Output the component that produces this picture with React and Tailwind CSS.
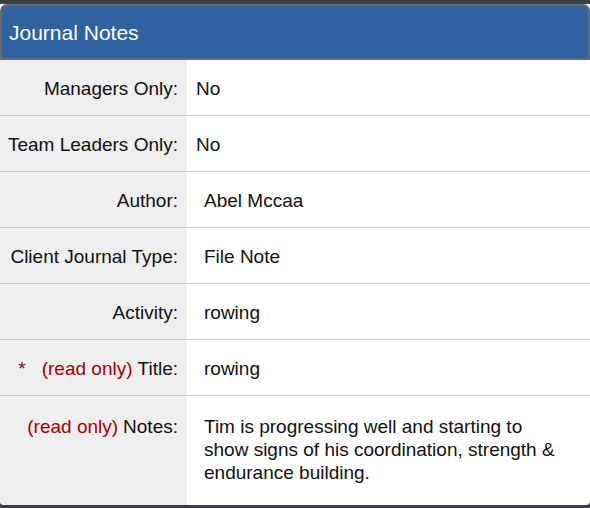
const rows = [
  { label: 'Managers Only:', value: 'No', pad: 'pl-[9px]' },
  { label: 'Team Leaders Only:', value: 'No', pad: 'pl-[9px]' },
  { label: 'Author:', value: 'Abel Mccaa' },
  { label: 'Client Journal Type:', value: 'File Note' },
  { label: 'Activity:', value: 'rowing' },
  { label: 'Title:', value: 'rowing', readOnly: true, required: true },
];

const App = () => {
  return (
    <div className="w-[590px] h-[508px] bg-[#3b4048] pt-[4px] overflow-hidden" style={{ fontFamily: '"Liberation Sans", Arial, sans-serif' }}>
      <div className="h-[501px] bg-white rounded-b-[4px] overflow-hidden flex flex-col">
        <div className="h-[56px] shrink-0 bg-[#2e63a0] border-2 border-[#6a6a6a] rounded-t-[7px] flex items-center px-[7px] pt-[1px]">
          <h1 className="text-[21px] text-white leading-none">Journal Notes</h1>
        </div>

        {rows.map((r, i) => (
          <div key={i} className="flex h-[56px] shrink-0 border-b border-[#cbcbcb] text-[19px] text-[#111]">
            <div className="w-[187px] shrink-0 bg-[#efefef] flex items-center justify-end pr-[9px] pt-[3px] whitespace-nowrap">
              {r.required && <span className="text-[#a30000] mr-[16px]">*</span>}
              {r.readOnly && <span className="text-[#a30000] mr-[5px]">(read only)</span>}
              {r.label}
            </div>
            <div className={`flex items-center pt-[3px] ${r.pad || 'pl-[17px]'}`}>{r.value}</div>
          </div>
        ))}

        <div className="flex flex-1 text-[19px] text-[#111]">
          <div className="w-[187px] shrink-0 bg-[#efefef] flex justify-end pr-[9px] pt-[19px] whitespace-nowrap leading-[23px]">
            <span className="text-[#a30000] mr-[5px]">(read only)</span>
            Notes:
          </div>
          <div className="pl-[17px] pr-[30px] pt-[19px] leading-[23px]">
            Tim is progressing well and starting to show signs of his coordination, strength &amp; endurance building.
          </div>
        </div>
      </div>
    </div>
  );
};

export default App;
